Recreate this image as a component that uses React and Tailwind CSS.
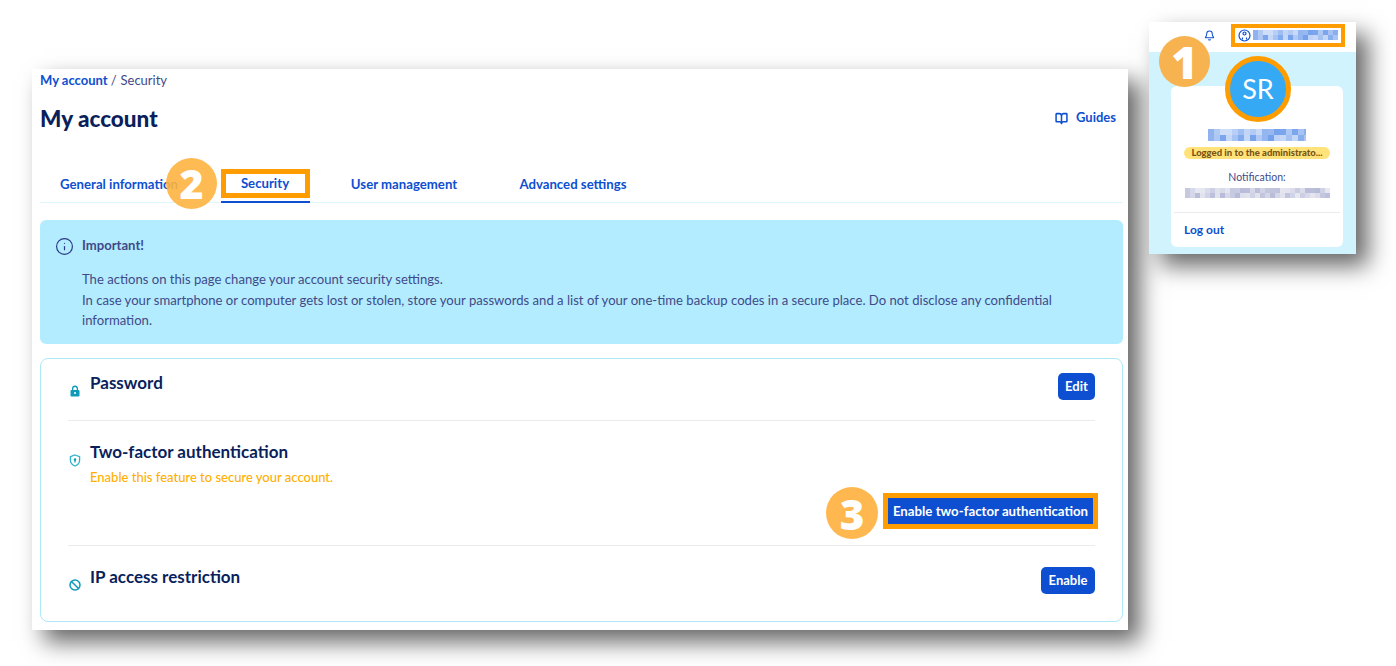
import { Bell, BookOpen, Info, Ban } from 'lucide-react';

const FONT = "font-['Lato','Noto_Sans',sans-serif]";

// blurred-out personal data in the screenshot, drawn as a mosaic
const Mosaic = ({ width, height, cell = 6, color }) => {
  const cells = [];
  const rows = Math.ceil(height / cell);
  const cols = Math.ceil(width / cell);
  for (let r = 0; r < rows; r++) {
    for (let c = 0; c < cols; c++) {
      const n = Math.abs(Math.sin((r + 1) * 12.9 + (c + 1) * 78.2) * 437.5) % 1;
      cells.push(
        <rect key={`${r}-${c}`} x={c * cell} y={r * cell} width={cell} height={cell} fill={color} opacity={0.25 + n * 0.6} />
      );
    }
  }
  return (
    <svg width={width} height={height} className="block">
      {cells}
    </svg>
  );
};

const StepBadge = ({ className, children }) => (
  <div className={`absolute flex items-center justify-center rounded-full text-white font-extrabold font-['Open_Sans',sans-serif] ${className}`}>
    {children}
  </div>
);

const Tab = ({ children, className = '' }) => (
  <div className={`flex items-center justify-center text-[13.2px] font-bold text-[#0d4fd0] ${className}`}>{children}</div>
);

const RowIcon = ({ children, className = '' }) => <div className={`w-[22px] pl-[1px] shrink-0 ${className}`}>{children}</div>;

const LockIcon = () => (
  <svg width="12" height="12" viewBox="0 0 12 12" fill="#0f9bb8">
    <path d="M3 5V3.6a3 3 0 0 1 6 0V5h.6c.5 0 .9.4.9.9v4.6c0 .5-.4.9-.9.9H2.400c-.5 0-.9-.4-.9-.9V5.900c0-.5.4-.9.9-.9H3zm1.300 0h3.400V3.600a1.700 1.700 0 0 0-3.400 0V5z" />
    <circle cx="6" cy="8" r="1" fill="#fff" />
  </svg>
);

const ShieldIcon = () => (
  <svg width="12" height="13" viewBox="0 0 12 13" fill="none" stroke="#2cb4d0" strokeWidth="1.300">
    <path d="M6 1l4.600 1.600v3.600c0 2.800-2 4.800-4.600 5.800-2.600-1-4.600-3-4.600-5.800V2.600L6 1z" />
    <circle cx="6" cy="5.500" r="1.200" fill="#0f9bb8" stroke="none" />
    <path d="M6 6v2.400" stroke="#0f9bb8" />
  </svg>
);

const App = () => {
  return (
    <div className={`relative w-[1396px] h-[666px] overflow-hidden bg-white ${FONT}`}>
      {/* main window */}
      <div className="absolute left-[32px] top-[69px] w-[1096px] h-[561px] bg-white pl-[8px] pr-[5px] shadow-[12px_12px_22px_rgba(0,0,0,0.6)]">
        <div className="h-[23px] flex items-center text-[13px] text-[#3f4a8a]">
          <span className="font-bold text-[#0d4fd0]">My account</span>
          <span className="ml-[3px]">/</span>
          <span className="ml-[4px]">Security</span>
        </div>

        <div className="mt-[12px] h-[28px] flex items-center justify-between pr-[6px]">
          <h1 className="text-[22.5px] pt-[1px] font-black text-[#0a1f5c]">My account</h1>
          <div className="flex items-center text-[13px] font-bold text-[#0d4fd0]">
            <BookOpen size={13} strokeWidth={2.800} />
            <span className="ml-[9px] -translate-x-[1px]">Guides</span>
          </div>
        </div>

        {/* tabs */}
        <div className="mt-[34px] h-[37px] flex border-b border-[#dff5fd]">
          <Tab className="w-[181px] pt-[2px] pr-[23px]">General information</Tab>
          <div className="w-[89px] h-[37px] border-b-2 border-[#0d4fd0]">
            <Tab className="w-full h-[29px] border-[5px] border-[#ff9d00] mt-[3px] pt-[1px] pr-[1px]">Security</Tab>
          </div>
          <Tab className="ml-[40px] w-[108px] pt-[2px]">User management</Tab>
          <Tab className="ml-[61px] w-[108px] pt-[2px]">Advanced settings</Tab>
        </div>

        {/* notice */}
        <div className="mt-[17px] h-[124px] rounded-md bg-[#b3ecfe] pl-[16px] pr-[16px] pt-[16px] text-[13.1px] text-[#3f4a8a]">
          <div className="flex items-center h-[20px]">
            <Info size={19} strokeWidth={1.500} className="text-[#2b3a86] -ml-[1px]" />
            <span className="ml-[8px] font-bold">Important!</span>
          </div>
          <div className="ml-[26px] mt-[13px] leading-[20.500px]">
            <p>The actions on this page change your account security settings.</p>
            <p>
              In case your smartphone or computer gets lost or stolen, store your passwords and a list of your one-time backup codes in a secure place. Do not disclose any confidential information.
            </p>
          </div>
        </div>

        {/* settings card */}
        <div className="mt-[14px] h-[264px] rounded-lg border border-[#aee9f8] pl-[27px] pr-[27px]">
          <div className="h-[62px] flex border-b border-[#e9ecef]">
            <RowIcon className="pt-[26px]"><LockIcon /></RowIcon>
            <div className="flex-1 pt-[13px] text-[17px] font-bold text-[#0a1f5c] leading-[22px]">Password</div>
            <button className="mt-[14px] h-[27px] w-[37px] rounded-[5px] bg-[#0d4fd0] text-white text-[13px] font-bold">Edit</button>
          </div>

          <div className="h-[125px] border-b border-[#e9ecef] flex">
            <RowIcon className="pt-[33px]"><ShieldIcon /></RowIcon>
            <div className="flex-1 pt-[20px]">
              <div className="text-[17px] font-bold text-[#0a1f5c] leading-[22px]">Two-factor authentication</div>
              <div className="mt-[4px] text-[13px] font-medium text-[#ffb000] leading-[20px]">Enable this feature to secure your account.</div>
              <div className="mt-[6px] -mr-[3px] flex justify-end">
                <button className="h-[36px] w-[215px] border-[5px] border-[#ff9d00] bg-[#0d4fd0] pt-[1px] text-white text-[13.25px] font-bold">
                  Enable two-factor authentication
                </button>
              </div>
            </div>
          </div>

          <div className="flex">
            <RowIcon className="pt-[33px]"><Ban size={12} strokeWidth={3} className="text-[#0f9bb8]" /></RowIcon>
            <div className="flex-1 pt-[20px] text-[17px] font-bold text-[#0a1f5c] leading-[22px]">IP access restriction</div>
            <button className="mt-[21px] h-[27px] w-[54px] rounded-[5px] bg-[#0d4fd0] text-white text-[13px] font-bold">Enable</button>
          </div>
        </div>
      </div>

      {/* account window */}
      <div className="absolute left-[1149px] top-[22px] w-[207px] h-[232px] bg-[#d0f3fd] flex flex-col shadow-[12px_12px_22px_rgba(0,0,0,0.6)]">
        <div className="h-[30px] bg-white flex items-center shrink-0">
          <Bell size={11} strokeWidth={2.200} className="ml-[55px] text-[#0d4fd0] -mt-[3px]" />
          <div className="ml-[16px] h-[23px] w-[114px] border-[4px] border-[#ff9d00] flex items-center pl-[3px] -mt-[4px]">
            <svg width="13" height="13" viewBox="0 0 13 13" fill="none" stroke="#0d4fd0" strokeWidth="1.200" className="shrink-0">
              <circle cx="6.500" cy="6.500" r="5.500" />
              <circle cx="6.500" cy="4.500" r="1.500" />
              <path d="M4.500 10.500V8.500M8.500 10.500V8.500" />
            </svg>
            <div className="ml-[2px]">
              <Mosaic width={85} height={10} cell={5} color="#5b8fe8" />
            </div>
          </div>
        </div>

        <div className="relative ml-[22px] mt-[34px] w-[172px] h-[161px] rounded-md bg-white flex flex-col items-center">
          <div className="absolute left-[54px] -top-[30px] w-[66px] h-[66px] rounded-full border-[5px] border-[#ff9d00] bg-[#36a9f5] text-white text-[27px] flex items-center justify-center">
            SR
          </div>
          <div className="mt-[43px]">
            <Mosaic width={98} height={12} cell={6} color="#5b8fe8" />
          </div>
          <div className="mt-[6px] w-[146px] h-[12px] rounded-full bg-[#ffe27a] text-[9.500px] font-black text-[#7a5416] flex items-center justify-center whitespace-nowrap">
            Logged in to the administrato...
          </div>
          <div className="mt-[11px] h-[14px] text-[10.5px] leading-[14px] text-[#3f4a8a]">Notification:</div>
          <div className="mt-[4px]">
            <Mosaic width={145} height={10} cell={5} color="#a9aed0" />
          </div>
          <div className="mt-[14px] w-[166px] border-t border-[#e9ecef]" />
          <div className="w-full pl-[13px] pt-[8px] text-[12px] font-bold text-[#0d4fd0]">Log out</div>
        </div>
      </div>

      {/* step markers */}
      <StepBadge className="left-[1159px] top-[36px] w-[51px] h-[51px] bg-[#f6b350] text-[45px]">1</StepBadge>
      <StepBadge className="left-[166px] top-[158px] w-[51px] h-[51px] bg-[#ffb340]/90 text-[41px]">2</StepBadge>
      <StepBadge className="left-[826px] top-[487px] w-[52px] h-[52px] bg-[#ffb84f] text-[42px]">3</StepBadge>
    </div>
  );
};

export default App;
